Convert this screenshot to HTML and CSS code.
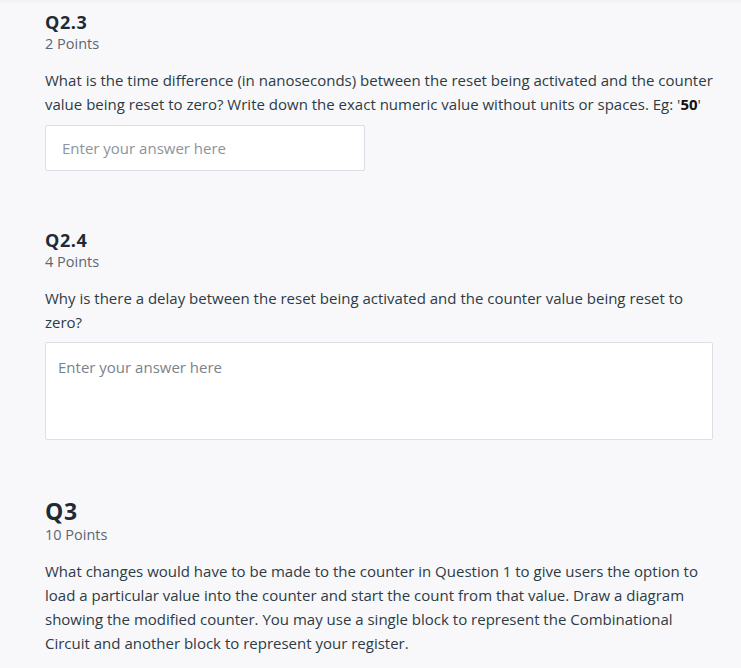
FILE: index.html
```html
<!DOCTYPE html>
<html lang="en">
<head>
<meta charset="utf-8">
<title>Questions</title>
<link rel="stylesheet" href="styles.css">
</head>
<body>
<main class="page">
  <section class="question">
    <h2 class="q-title">Q2.3</h2>
    <div class="q-points">2 Points</div>
    <p class="q-text">What is the time difference (in nanoseconds) between the reset being activated and the counter value being reset to zero? Write down the exact numeric value without units or spaces. Eg: '<strong>50</strong>'</p>
    <input class="answer-input" type="text" placeholder="Enter your answer here">
  </section>
  <section class="question">
    <h2 class="q-title">Q2.4</h2>
    <div class="q-points">4 Points</div>
    <p class="q-text">Why is there a delay between the reset being activated and the counter value being reset to zero?</p>
    <textarea class="answer-area" placeholder="Enter your answer here"></textarea>
  </section>
  <section class="question">
    <h2 class="q-title q-title-lg">Q3</h2>
    <div class="q-points">10 Points</div>
    <p class="q-text">What changes would have to be made to the counter in Question 1 to give users the option to load a particular value into the counter and start the count from that value. Draw a diagram showing the modified counter. You may use a single block to represent the Combinational Circuit and another block to represent your register.</p>
  </section>
</main>
</body>
</html>
```

FILE: styles.css
```css
html, body {
  margin: 0;
  padding: 0;
  background: #f8f8fa;
}
body {
  font-family: "Open Sans", "Liberation Sans", sans-serif;
  color: #2d3b45;
  box-shadow: inset 0 6px 5px -4px rgba(0,0,0,0.04);
  min-height: 668px;
}
.page {
  padding: 10px 28px 0 45px;
  display: flex;
  flex-direction: column;
  gap: 57px;
}
.question {
  display: flex;
  flex-direction: column;
}
.q-title {
  margin: 0;
  font-family: "Open Sans", "Liberation Sans", sans-serif;
  font-weight: 700;
  font-size: 18px;
  line-height: 24px;
  letter-spacing: 0.6px;
  color: #1e2b33;
}
.q-title-lg {
  font-size: 23px;
  line-height: 28px;
}
.q-points {
  font-size: 14.5px;
  line-height: 20px;
  color: #5d6770;
}
.q-text {
  margin: 14px 0 0;
  font-size: 15px;
  line-height: 24px;
  color: #2d3b45;
}
.q-text strong {
  font-weight: 700;
  color: #111;
}
.answer-input {
  box-sizing: border-box;
  margin-top: 9px;
  width: 320px;
  height: 46px;
  padding: 0 16px;
  border: 1px solid #dedee6;
  border-radius: 2px;
  background: #fff;
  font-family: "Open Sans", "Liberation Sans", sans-serif;
  font-size: 15px;
  outline: none;
}
.answer-area {
  box-sizing: border-box;
  margin-top: 8px;
  width: 100%;
  height: 98px;
  padding: 14px 12px;
  border: 1px solid #dedee6;
  border-radius: 2px;
  background: #fff;
  font-family: "Open Sans", "Liberation Sans", sans-serif;
  font-size: 15px;
  line-height: 20px;
  resize: none;
  outline: none;
}
.answer-input::placeholder,
.answer-area::placeholder {
  color: #8c949c;
  opacity: 1;
}
.answer-area::placeholder {
  color: #7a838b;
}
```
